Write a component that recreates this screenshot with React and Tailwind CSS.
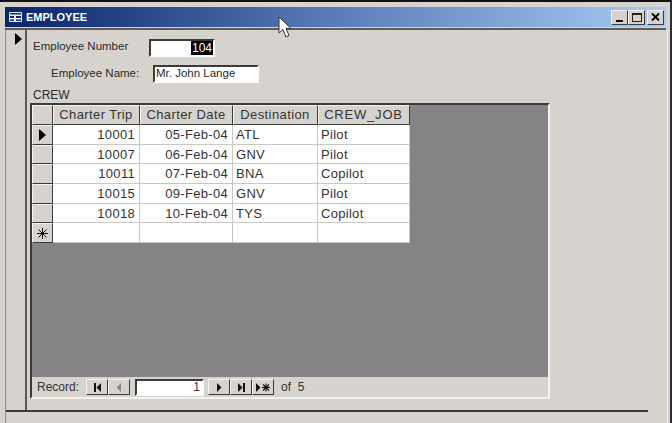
import React from "react";

const rows = [
  { trip: "10001", date: "05-Feb-04", dest: "ATL", job: "Pilot", current: true },
  { trip: "10007", date: "06-Feb-04", dest: "GNV", job: "Pilot" },
  { trip: "10011", date: "07-Feb-04", dest: "BNA", job: "Copilot" },
  { trip: "10015", date: "09-Feb-04", dest: "GNV", job: "Pilot" },
  { trip: "10018", date: "10-Feb-04", dest: "TYS", job: "Copilot" },
];

const raised = "border border-t-[#f4f3f0] border-l-[#f4f3f0] border-r-[#3d3b38] border-b-[#3d3b38] bg-[#d6d3ce]";
const sunken = "border-2 border-t-[#3a3a3a] border-l-[#3a3a3a] border-r-white border-b-white bg-white";
const columns = "grid grid-cols-[21px_87px_93px_85px_92px]";

function Arrow({ className = "" }) {
  return (
    <svg width="8" height="12" viewBox="0 0 8 12" className={className}>
      <path d="M0 0 L7 6 L0 12 Z" fill="#000" />
    </svg>
  );
}

function HeaderCell({ children }) {
  return (
    <div className={`${raised} h-[20px] flex items-center justify-center pr-[1px] text-[13px] tracking-[0.4px] text-[#333]`}>
      {children}
    </div>
  );
}

function Cell({ children, right }) {
  return (
    <div className={`h-[19.7px] pt-[1px] border-r border-b border-[#c8c6c2] bg-white flex items-center text-[13px] tracking-[0.3px] text-[#333] ${right ? "justify-end pr-[4px]" : "pl-[3px]"}`}>
      {children}
    </div>
  );
}

function Selector({ children }) {
  return <div className={`${raised} h-[19.7px] flex items-center justify-center`}>{children}</div>;
}

function NavButton({ children, w = "w-[22px]" }) {
  return <div className={`${raised} ${w} h-[16px] flex items-center justify-center`}>{children}</div>;
}

export default function App() {
  return (
    <div className="relative w-[672px] h-[423px] overflow-hidden bg-[#d6d3ce] font-['Liberation_Sans',Arial,sans-serif] border-t-2 border-t-[#111] border-r-2 border-r-[#2e2e3a]">
      <div className="h-[5px]" />

      {/* title bar */}
      <div className="ml-[5px] mr-[4px] h-[20px] flex items-center justify-between bg-gradient-to-r from-[#0a246a] via-[#5a7db8] to-[#a8ccf4]">
        <div className="flex items-center">
          <svg width="13" height="10" viewBox="0 0 13 10" className="ml-[4px] mr-[4px]">
            <rect width="13" height="10" rx="1" fill="#e8ebf2" />
            <path d="M1 1h11v1.5H1zM1 4h4v2H1zM7 4h5v2H7zM1 7.5h4v1.5H1zM7 7.5h5v1.5H7z" fill="#0f2a6e" />
          </svg>
          <span className="text-[11px] font-bold text-white">EMPLOYEE</span>
        </div>
        <div className="flex items-center mr-[2px]">
          <div className={`${raised} w-[17px] h-[15px] flex items-end justify-center pb-[2px]`}>
            <div className="w-[7px] h-[2px] bg-black" />
          </div>
          <div className={`${raised} w-[17px] h-[15px] flex items-center justify-center`}>
            <div className="w-[10px] h-[9px] border border-[#222] border-t-2" />
          </div>
          <div className={`${raised} w-[17px] h-[15px] ml-[2px] flex items-center justify-center`}>
            <svg width="9" height="8" viewBox="0 0 9 8">
              <path d="M1 0.5 L8 7.5 M8 0.5 L1 7.5" stroke="#000" strokeWidth="1.8" />
            </svg>
          </div>
        </div>
      </div>
      <div className="ml-[5px] mr-[4px] mt-[1px] h-[2px] bg-[#5f5b55]" />

      <div className="ml-[5px] w-[663px] h-[394px] border-l border-l-[#8f8d88] border-r border-r-[#f4f3ee]">
        <div className="flex w-[642px] h-[382px] border-b-2 border-b-[#3c3a36]">
          {/* record selector */}
          <div className="w-[21px] shrink-0 border-r-2 border-r-[#5a5854] pt-[3px] pl-[9px]">
            <Arrow />
          </div>

          {/* form */}
          <div className="flex-1 pl-[6px] text-[#2a2a2a]">
            <div className="flex items-center h-[18px] mt-[9px]">
              <span className="w-[116px] text-[11.5px] -mt-[2px]">Employee Number</span>
              <div className="w-[66px] h-[18px] flex justify-end items-center border-2 border-t-[#3a3a3a] border-l-[#3a3a3a] border-r-white border-b-white bg-white">
                <span className="bg-black text-white text-[12px] leading-[14px] px-[1px]">104</span>
              </div>
            </div>
            <div className="flex items-center h-[18px] mt-[8px]">
              <span className="ml-[18px] w-[102px] text-[11.5px]">Employee Name:</span>
              <div className={`${sunken} w-[106px] h-[18px] flex items-center pl-[1px] text-[11.5px]`}>Mr. John Lange</div>
            </div>
            <div className="h-[14px] mt-[5px] text-[12px] leading-[14px]">CREW</div>

            {/* subform */}
            <div className="w-[520px] h-[296px] -ml-[3px] mt-[1px] border-t-2 border-l-2 border-t-[#3a3a3a] border-l-[#3a3a3a] border-r-2 border-b-2 border-r-[#f4f3ee] border-b-[#f4f3ee] flex flex-col">
              <div className="flex-1 bg-[#858385]">
                <div className={`${columns} w-[378px]`}>
                  <HeaderCell />
                  <HeaderCell>Charter Trip</HeaderCell>
                  <HeaderCell>Charter Date</HeaderCell>
                  <HeaderCell>Destination</HeaderCell>
                  <HeaderCell>
                    <span className="tracking-[0.8px]">CREW_JOB</span>
                  </HeaderCell>
                  {rows.map((row) => (
                    <React.Fragment key={row.trip}>
                      <Selector>{row.current && <Arrow />}</Selector>
                      <Cell right>{row.trip}</Cell>
                      <Cell right>{row.date}</Cell>
                      <Cell>{row.dest}</Cell>
                      <Cell>{row.job}</Cell>
                    </React.Fragment>
                  ))}
                  <Selector>
                    <svg width="11" height="11" viewBox="0 0 11 11">
                      <path d="M5.5 0v11M0 5.5h11M1.5 1.5l8 8M9.5 1.5l-8 8" stroke="#111" strokeWidth="1" />
                    </svg>
                  </Selector>
                  <Cell />
                  <Cell />
                  <Cell />
                  <Cell />
                </div>
              </div>

              {/* record navigation */}
              <div className="h-[20px] shrink-0 flex items-center pl-[5px] text-[12px] text-[#333]">
                <span className="w-[49px]">Record:</span>
                <NavButton>
                  <svg width="9" height="9" viewBox="0 0 9 9"><path d="M1 0h2v9H1zM8 0v9L3.5 4.5z" fill="#111" /></svg>
                </NavButton>
                <NavButton>
                  <svg width="6" height="9" viewBox="0 0 6 9"><path d="M5 0v9L0.5 4.5z" fill="#8a8884" /></svg>
                </NavButton>
                <div className={`${sunken} w-[69px] h-[17px] ml-[5px] flex items-center justify-end pr-[2px]`}>1</div>
                <div className="ml-[4px] flex">
                  <NavButton>
                    <svg width="6" height="9" viewBox="0 0 6 9"><path d="M1 0v9L5.5 4.5z" fill="#111" /></svg>
                  </NavButton>
                  <NavButton>
                    <svg width="9" height="9" viewBox="0 0 9 9"><path d="M1 0v9L5.5 4.5zM6 0h2v9H6z" fill="#111" /></svg>
                  </NavButton>
                  <NavButton>
                    <svg width="16" height="9" viewBox="0 0 16 9">
                      <path d="M1 0v9L5.5 4.5z" fill="#111" />
                      <path d="M11 0.5v8M7 4.5h8M8 1.5l6 6M14 1.5l-6 6" stroke="#111" strokeWidth="1.1" />
                    </svg>
                  </NavButton>
                </div>
                <span className="ml-[7px]">of&nbsp; 5</span>
              </div>
            </div>
          </div>
        </div>
      </div>

      {/* mouse pointer */}
      <svg width="15" height="23" viewBox="0 0 15 23" className="absolute left-[278px] top-[14px]">
        <path d="M1 1 L1 17 L5 13.5 L8 21 L11 19.5 L8 12.5 L13 12.5 Z" fill="#fff" stroke="#333" strokeWidth="1" />
      </svg>
    </div>
  );
}
